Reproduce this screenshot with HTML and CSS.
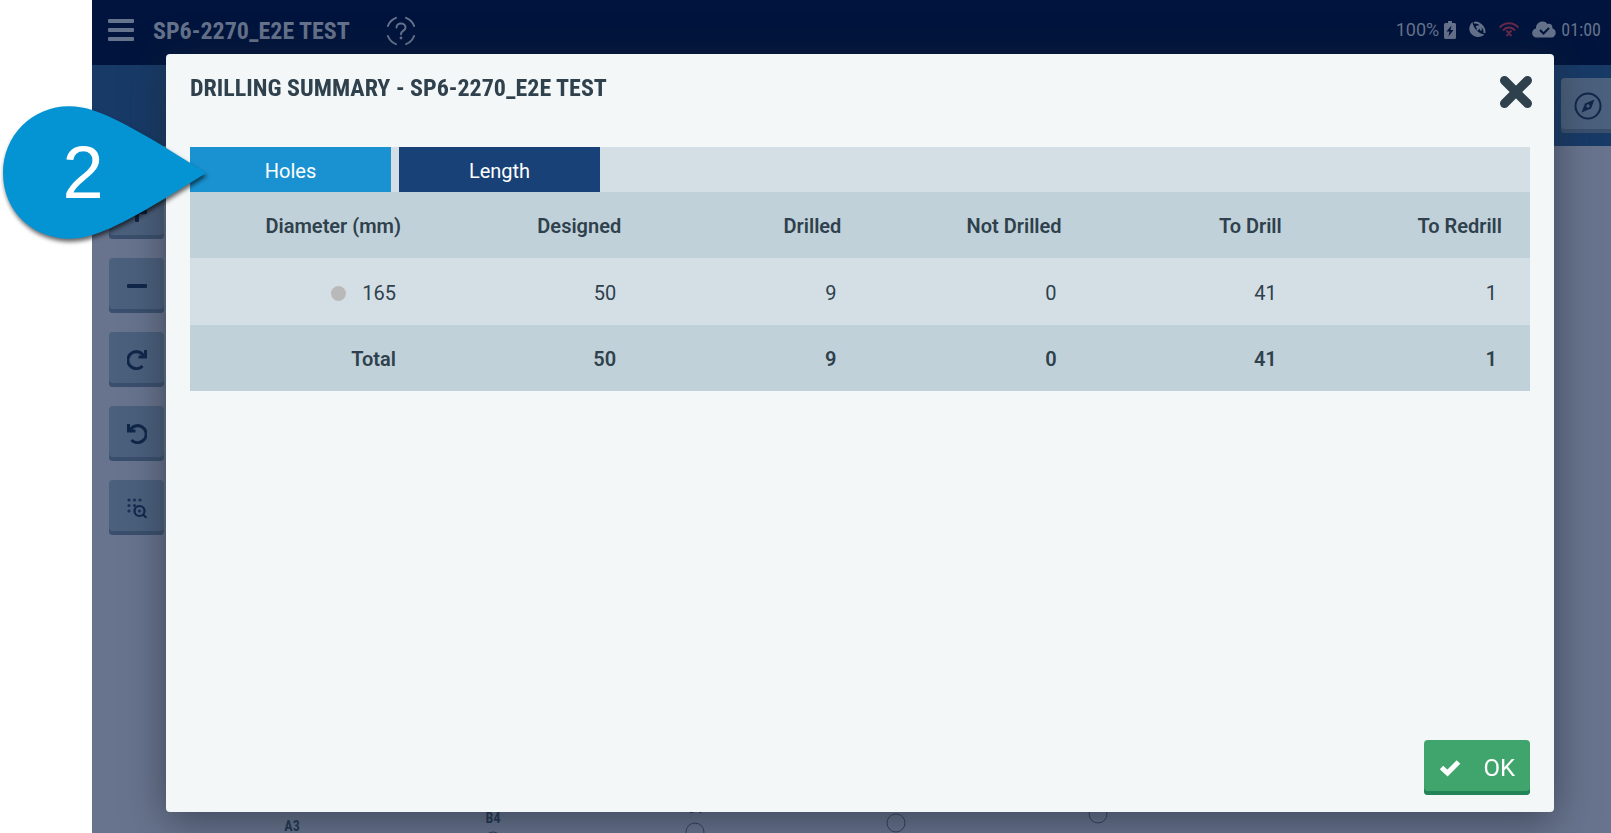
FILE: index.html
```html
<!DOCTYPE html>
<html lang="en">
<head>
    <meta charset="UTF-8">
    <meta name="viewport" content="width=device-width, initial-scale=1.0">
    <title>Drilling Summary</title>
    <link rel="stylesheet" href="styles.css">
</head>
<body>
    <div class="app">
        <header class="topbar">
            <button type="button" class="icon-button" aria-label="Menu">
                <svg width="26" height="24" viewBox="0 0 26 24" fill="currentColor">
                    <rect width="26" height="4" rx="1"/>
                    <rect y="9" width="26" height="4" rx="1"/>
                    <rect y="18" width="26" height="4" rx="1"/>
                </svg>
            </button>
            <h1 class="plan-name">SP6-2270_E2E TEST</h1>
            <button type="button" class="icon-button help" aria-label="Help">
                <svg width="30" height="30" viewBox="0 0 30 30" fill="none" stroke="currentColor" stroke-width="2" stroke-linecap="round">
                    <path d="M10 1.9A14 14 0 0 0 1.9 10M20 1.9A14 14 0 0 1 28.1 10M1.9 20A14 14 0 0 0 10 28.1M28.1 20A14 14 0 0 1 20 28.1"/>
                    <path d="M10.5 11.5C10.5 6.3 19.5 6.3 19.5 11.5C19.5 14.8 15 14.6 15 18.2"/>
                    <circle cx="15" cy="22" r="1.4" fill="currentColor" stroke="none"/>
                </svg>
            </button>
            <div class="status">
                <span class="battery">100%
                    <svg width="12" height="18" viewBox="0 0 12 18"><path fill="currentColor" fill-rule="evenodd" d="M4 0h4v2h2.500q1.500 0 1.500 1.500v13q0 1.500-1.500 1.500h-9q-1.500 0-1.500-1.500v-13q0-1.500 1.500-1.500h2.500zM7.500 4.500L2.500 10.500h3l-1 5 5-6.500h-3z"/></svg>
                </span>
                <svg width="17" height="17" viewBox="0 0 17 17">
                    <path fill="currentColor" d="M3.500 1C-1 5-.5 11 3.500 14C7.500 17 12.500 16.500 15.500 13.500C10 13 4 7 3.500 1z"/>
                    <path fill="none" stroke="currentColor" stroke-width="2" d="M5 2C8 0 16 5 15.500 12M7 6L11.500 5L12 9.500M8 9L11.500 5"/>
                </svg>
                <svg class="offline" width="20" height="15" viewBox="0 0 20 15" fill="none" stroke="currentColor" stroke-width="2">
                    <path d="M.7 5.500C5.500-.2 14.500-.2 19.300 5.500M4 8.500C7 4.500 13 4.500 16 8.500M7.500 8.500l5 5.500M12.500 8.500l-5 5.500"/>
                </svg>
                <svg width="24" height="17" viewBox="0 0 24 17">
                    <path fill="currentColor" d="M5 16.500C-1 16.500-1.500 8.500 4 7.500C3.500 1 12-2 15.500 3C18.500 2 21 4 20.300 7.200C25.500 8.500 24.500 16.500 19 16.500z"/>
                    <path class="cloud-check" d="M8 9l3.500 3.500L17 7"/>
                </svg>
                <time class="clock">01:00</time>
            </div>
        </header>
        <div class="toolbar">
            <button type="button" class="tool compass" aria-label="Compass">
                <svg width="28" height="28" viewBox="0 0 28 28">
                    <circle cx="14" cy="14" r="12.500" fill="none" stroke="currentColor" stroke-width="2"/>
                    <path fill="currentColor" fill-rule="evenodd" d="M20.500 7.500L17 16.500L7.500 20.500L11 11.500zM14 12.300a1.700 1.700 0 1 0 .01 0z"/>
                </svg>
            </button>
        </div>
        <main class="map">
            <nav class="map-tools">
                <button type="button" class="tool" aria-label="Zoom in">
                    <svg width="20" height="20" viewBox="0 0 20 20" fill="currentColor"><rect y="8" width="20" height="4" rx="1"/><rect x="8" width="4" height="20" rx="1"/></svg>
                </button>
                <button type="button" class="tool" aria-label="Zoom out">
                    <svg width="20" height="20" viewBox="0 0 20 20" fill="currentColor"><rect y="8" width="20" height="4" rx="1"/></svg>
                </button>
                <button type="button" class="tool" aria-label="Rotate right">
                    <svg width="20" height="20" viewBox="0 0 20 20" fill="none" stroke="currentColor" stroke-width="3"><path d="M17 6.500A8.500 8.500 0 1 0 15.500 16M18.500 0V7H11.500"/></svg>
                </button>
                <button type="button" class="tool" aria-label="Rotate left">
                    <svg width="20" height="20" viewBox="0 0 20 20" fill="none" stroke="currentColor" stroke-width="3"><path d="M3 6.500A8.500 8.500 0 1 1 4.500 16M1.500 0V7H8.500"/></svg>
                </button>
                <button type="button" class="tool" aria-label="Zoom to pattern">
                    <svg width="20" height="20" viewBox="0 0 20 20">
                        <g fill="currentColor" opacity=".8">
                            <circle cx="2" cy="2" r="1.600"/><circle cx="7.500" cy="2" r="1.600"/><circle cx="13" cy="2" r="1.600"/>
                            <circle cx="2" cy="7.500" r="1.600"/><circle cx="7.500" cy="7.500" r="1.600"/>
                            <circle cx="2" cy="13" r="1.600"/>
                            <circle cx="12.500" cy="13" r="1.600"/>
                        </g>
                        <g fill="none" stroke="currentColor" stroke-width="2.200"><circle cx="12.500" cy="13" r="5"/><path d="M16 16.500L19.500 20"/></g>
                    </svg>
                </button>
            </nav>
            <!-- drill holes on the map canvas -->
            <svg class="holes" width="860" height="40" viewBox="0 0 860 40">
                <g class="hole-label">
                    <text x="40" y="38">A3</text>
                    <text x="241" y="30">B4</text>
                    <text x="443" y="20">C4</text>
                </g>
                <g class="hole-ring">
                    <circle cx="241" cy="48" r="9"/>
                    <circle cx="443" cy="39" r="9"/>
                    <circle cx="644" cy="30" r="9"/>
                    <circle cx="846" cy="21" r="9"/>
                </g>
            </svg>
        </main>
    </div>

    <div class="overlay">
        <section class="modal" role="dialog" aria-labelledby="modalTitle">
            <header class="modal-header">
                <h2 id="modalTitle">DRILLING SUMMARY - SP6-2270_E2E TEST</h2>
                <button type="button" class="close" aria-label="Close">
                    <svg width="34" height="34" viewBox="0 0 34 34" stroke="currentColor" stroke-width="9" stroke-linecap="round"><path d="M5.500 5.500L28.500 28.500M28.500 5.500L5.500 28.500"/></svg>
                </button>
            </header>
            <div class="tabs" role="tablist">
                <button type="button" class="tab active" role="tab" aria-selected="true">Holes</button>
                <button type="button" class="tab" role="tab" aria-selected="false">Length</button>
            </div>
            <table class="summary">
                <thead>
                    <tr>
                        <th>Diameter (mm)</th>
                        <th>Designed</th>
                        <th>Drilled</th>
                        <th>Not Drilled</th>
                        <th>To Drill</th>
                        <th>To Redrill</th>
                    </tr>
                </thead>
                <tbody>
                    <tr>
                        <td><span class="dot"></span>165</td>
                        <td>50</td>
                        <td>9</td>
                        <td>0</td>
                        <td>41</td>
                        <td>1</td>
                    </tr>
                </tbody>
                <tfoot>
                    <tr>
                        <td>Total</td>
                        <td>50</td>
                        <td>9</td>
                        <td>0</td>
                        <td>41</td>
                        <td>1</td>
                    </tr>
                </tfoot>
            </table>
            <footer class="modal-footer">
                <button type="button" class="ok">
                    <svg width="22" height="18" viewBox="0 0 22 18" fill="none" stroke="currentColor" stroke-width="5"><path d="M2.500 8.500L8.500 14L19.500 3"/></svg>
                    OK
                </button>
            </footer>
        </section>
    </div>

    <svg class="callout" width="220" height="150" viewBox="0 0 220 150">
        <path d="M206 73C150 37 115 17 92 10C45-5 3 28 3 73C3 120 47 148 89 136C115 129 150 108 206 73z"/>
        <text x="83" y="98">2</text>
    </svg>
</body>
</html>
```

FILE: styles.css
```css
* {
    box-sizing: border-box;
}
body {
    margin: 0;
    background: #fff;
    font-family: Roboto, sans-serif;
    font-size: 20px;
    color: #2f414d;
}
button {
    border: 0;
    padding: 0;
    font: inherit;
    color: inherit;
    cursor: pointer;
}
svg {
    display: block;
    flex: none;
}
h1, h2 {
    margin: 0;
    font-family: "Roboto Condensed", "Liberation Sans Narrow", Roboto, sans-serif;
    font-size: 24px;
    line-height: 28px;
    font-weight: 700;
}

/* app behind the dialog, already dimmed */
.app {
    display: flex;
    flex-direction: column;
    height: 100vh;
    margin-left: 92px;
    overflow: hidden;
}
.topbar {
    display: flex;
    align-items: center;
    height: 65px;
    padding: 0 10px 3px 16px;
    background: #00143d;
    color: #66738c;
}
.icon-button {
    background: none;
}
.plan-name {
    margin-left: 19px;
}
.help {
    margin-left: 36px;
}
.status {
    display: flex;
    align-items: center;
    gap: 13px;
    margin-left: auto;
    padding-bottom: 3px;
    font-size: 18px;
}
.battery {
    display: flex;
    align-items: center;
    gap: 5px;
}
.offline {
    color: #68294a;
}
.cloud-check {
    fill: none;
    stroke: #00143d;
    stroke-width: 2;
}
.clock {
    margin-left: -8px;
    font-family: "Roboto Condensed", "Liberation Sans Narrow", Roboto, sans-serif;
}
.toolbar {
    display: flex;
    justify-content: flex-end;
    height: 81px;
    padding-top: 13px;
    background: #173a67;
}
.tool {
    display: flex;
    align-items: center;
    justify-content: center;
    width: 55px;
    height: 55px;
    border-radius: 4px;
    background: #4b607d;
    box-shadow: inset 0 -4px #3a4f6d;
    color: #10264a;
}
.compass {
    width: 50px;
    padding-left: 4px;
    border-radius: 4px 0 0 4px;
}
.map {
    position: relative;
    flex: 1;
    background: #68748e;
}
.map-tools {
    display: flex;
    flex-direction: column;
    gap: 19px;
    padding: 38px 17px;
}
.holes {
    position: absolute;
    left: 160px;
    bottom: 0;
}
.hole-label {
    font-family: "Roboto Condensed", "Liberation Sans Narrow", Roboto, sans-serif;
    font-size: 14px;
    font-weight: 700;
    text-anchor: middle;
    fill: #203651;
}
.hole-ring {
    fill: none;
    stroke: #2d405b;
    stroke-width: 1;
}

/* dialog */
.overlay {
    position: fixed;
    inset: 0;
    display: flex;
    padding: 54px 57px 21px 166px;
}
.modal {
    flex: 1;
    display: flex;
    flex-direction: column;
    padding: 20px 24px 17px;
    border-radius: 4px;
    background: #f3f7f8;
    box-shadow: 0 8px 40px rgba(32, 40, 50, 0.6);
}
.modal-header {
    display: flex;
    justify-content: space-between;
    height: 73px;
}
.close {
    align-self: flex-start;
    margin: 1px -3px 0 0;
    background: none;
}
.tabs {
    display: flex;
    gap: 8px;
    height: 45px;
    background: #d4dfe5;
}
.tab {
    width: 201px;
    padding-top: 3px;
    background: #174177;
    color: #fff;
}
.tab.active {
    background: #1a92d1;
}
.summary {
    width: 100%;
    table-layout: fixed;
    border-collapse: collapse;
}
.summary th,
.summary td {
    height: 66px;
    padding: 2px 33px 0 0;
    text-align: right;
}
.summary th {
    padding-right: 28px;
    font-weight: 600;
}
.summary th:first-child {
    width: 239px;
}
.summary thead,
.summary tfoot {
    background: #c1d1d9;
}
.summary tbody {
    background: #d4dfe5;
}
.summary tbody td {
    height: 67px;
}
.summary tfoot {
    font-weight: 600;
}
.dot {
    display: inline-block;
    width: 15px;
    height: 15px;
    margin-right: 16px;
    border-radius: 50%;
    background: #b9b9b9;
    vertical-align: -1px;
}
.modal-footer {
    display: flex;
    justify-content: flex-end;
    margin-top: auto;
}
.ok {
    display: flex;
    align-items: center;
    gap: 22px;
    height: 55px;
    padding: 0 15px;
    border-radius: 4px;
    background: #40a56c;
    box-shadow: inset 0 -4px #23845a;
    color: #fff;
    font-size: 24px;
}

/* numbered pointer laid over the page */
.callout {
    position: absolute;
    left: 0;
    top: 100px;
    filter: drop-shadow(1px 3px 2px rgba(0, 0, 0, 0.6));
}
.callout path {
    fill: #0494d3;
}
.callout text {
    font-size: 74px;
    font-family: "Liberation Sans", sans-serif;
    text-anchor: middle;
    fill: #fff;
}
```
